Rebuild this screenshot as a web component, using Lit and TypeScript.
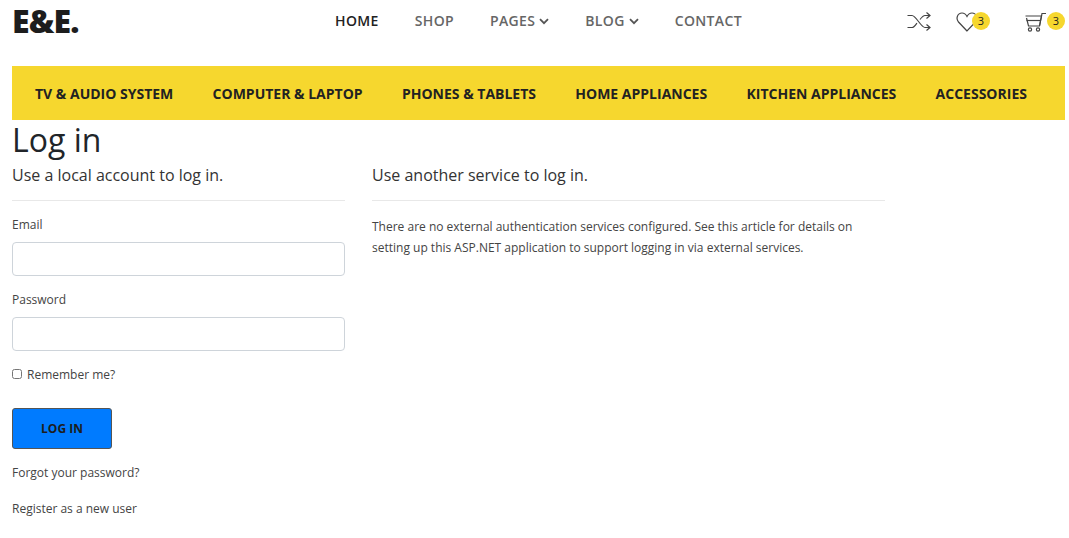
import { LitElement, html, css, svg } from "lit";
import { customElement } from "lit/decorators.js";

const chevron = svg`<svg class="chev" width="10" height="7" viewBox="0 0 10 7"><path d="M1 1.2 5 5.2 9 1.2" fill="none" stroke="#555" stroke-width="1.8"/></svg>`;

@customElement("app-root")
export class AppRoot extends LitElement {
  static styles = css`
    :host { display: block; font-family: "Open Sans", sans-serif; color: #212529; background: #fff; height: 538px; overflow: hidden; padding: 0 4px 0 12px; box-sizing: border-box; }
    a { color: inherit; text-decoration: none; }
    .top { display: grid; grid-template-columns: 1fr auto 1fr; align-items: start; height: 66px; }
    .logo { font-weight: 800; font-size: 32px; line-height: 42px; color: #1d1d1d; letter-spacing: -0.8px; margin: 0; }
    .menu { display: flex; gap: 36px; font-size: 14px; font-weight: 600; color: #666; line-height: 20px; padding-top: 11px; letter-spacing: 0.35px; }
    .menu a { display: flex; align-items: center; gap: 4px; }
    .menu a.on { color: #222; }
    .chev { margin-top: 1px; }
    .tools { display: flex; justify-content: flex-end; padding-top: 10px; }
    .tool { position: relative; display: block; height: 24px; }
    .tool.shuffle { margin-right: 25px; }
    .tool.heart { margin-right: 35px; width: 34px; }
    .tool.cart { width: 40px; }
    .tool svg { display: block; }
    .count { position: absolute; right: 0; top: 2px; width: 18px; height: 18px; border-radius: 50%; background: #f6d72e; font-size: 11px; line-height: 18px; text-align: center; color: #222; }
    .cats { display: flex; justify-content: space-between; align-items: center; height: 54px; background: #f6d72e; padding: 0 38px 0 23px; font-size: 14px; font-weight: 700; color: #222; box-sizing: border-box; }
    h1 { font-size: 32px; font-weight: 400; line-height: 40px; margin: 0; color: #212529; }
    .cols { display: flex; gap: 27px; align-items: flex-start; }
    .left { width: 333px; }
    .right { width: 513px; }
    h4 { font-size: 16px; font-weight: 400; line-height: 24px; margin: 0; color: #333; padding-top: 3px; }
    hr { border: 0; border-top: 1px solid #e8e8e8; margin: 13px 0 15px; }
    label { display: block; font-size: 12px; line-height: 18px; color: #444; margin: 0; }
    .field { margin-bottom: 15px; }
    .input { display: block; height: 34px; box-sizing: border-box; border: 1px solid #ced4da; border-radius: 4px; margin-top: 8px; width: 100%; background: #fff; padding: 0; }
    .remember { display: flex; align-items: center; gap: 5px; font-size: 12px; line-height: 18px; color: #444; margin-top: 15px; }
    .remember input { width: 10px; height: 10px; margin: 0; position: relative; top: -1px; }
    .btn { display: block; width: 100px; height: 41px; box-sizing: border-box; border: 1px solid #555; border-radius: 3px; background: #007bff; color: #1d1d1d; font: 700 12px "Open Sans", sans-serif; margin: 24px 0 0; padding: 0; }
    .links { font-size: 12px; line-height: 18px; color: #444; }
    .links p { margin: 15px 0 18px; }
    .txt { font-size: 12px; line-height: 21px; color: #444; margin: 0; }
    .sp { padding-top: 0; }
  `;

  render() {
    return html`
      <div class="top">
        <p class="logo">E&amp;E.</p>
        <nav class="menu">
          <a class="on" href="#">HOME</a>
          <a href="#">SHOP</a>
          <a href="#">PAGES ${chevron}</a>
          <a href="#">BLOG ${chevron}</a>
          <a href="#">CONTACT</a>
        </nav>
        <div class="tools">
          <a class="tool shuffle" href="#">
            <svg width="24" height="24" viewBox="0 0 24 24" fill="none" stroke="#444" stroke-width="1.2">
              <path d="M0.5 5.5H5C9 5.5 14 17.5 18 17.5H23M0.5 17.5H5C7 17.5 8.5 15 10 13M13 9.5C14.5 7.5 16 5.5 18 5.5H23"/>
              <path d="M19.5 2.5 23 5.5 19.5 8.5M19.5 14.5 23 17.5 19.5 20.5"/>
            </svg>
          </a>
          <a class="tool heart" href="#">
            <svg width="24" height="24" viewBox="0 0 24 24" fill="none" stroke="#444" stroke-width="1.2">
              <path d="M11 21 2.5 12C-0.5 8.5 1.5 3 6 3 8.5 3 10 4.5 11 6.5 12 4.5 13.5 3 16 3 20.5 3 22.5 8.5 19.5 12Z"/>
            </svg>
            <span class="count">3</span>
          </a>
          <a class="tool cart" href="#">
            <svg width="24" height="24" viewBox="0 0 24 24" fill="none" stroke="#444" stroke-width="1.2">
              <path d="M0.5 6H16.5L14.5 16H3.5L1.5 8"/>
              <path d="M1.5 10.5H15.5"/>
              <path d="M14.5 16 17 3.5H21"/>
              <circle cx="5" cy="19.5" r="1.6"/><circle cx="13" cy="19.5" r="1.6"/>
            </svg>
            <span class="count">3</span>
          </a>
        </div>
      </div>
      <nav class="cats">
        <a href="#">TV &amp; AUDIO SYSTEM</a>
        <a href="#">COMPUTER &amp; LAPTOP</a>
        <a href="#">PHONES &amp; TABLETS</a>
        <a href="#">HOME APPLIANCES</a>
        <a href="#">KITCHEN APPLIANCES</a>
        <a href="#">ACCESSORIES</a>
      </nav>
      <h1>Log in</h1>
      <div class="cols">
        <section class="left">
          <h4>Use a local account to log in.</h4>
          <hr />
          <div class="field"><label>Email</label><input class="input" type="text" /></div>
          <div class="field"><label>Password</label><input class="input" type="password" /></div>
          <label class="remember"><input type="checkbox" />Remember me?</label>
          <button class="btn">LOG IN</button>
          <div class="links">
            <p><a href="#">Forgot your password?</a></p>
            <p><a href="#">Register as a new user</a></p>
          </div>
        </section>
        <section class="right">
          <h4>Use another service to log in.</h4>
          <hr />
          <p class="txt">There are no external authentication services configured. See this article for details on setting up this ASP.NET application to support logging in via external services.</p>
        </section>
      </div>
    `;
  }
}
